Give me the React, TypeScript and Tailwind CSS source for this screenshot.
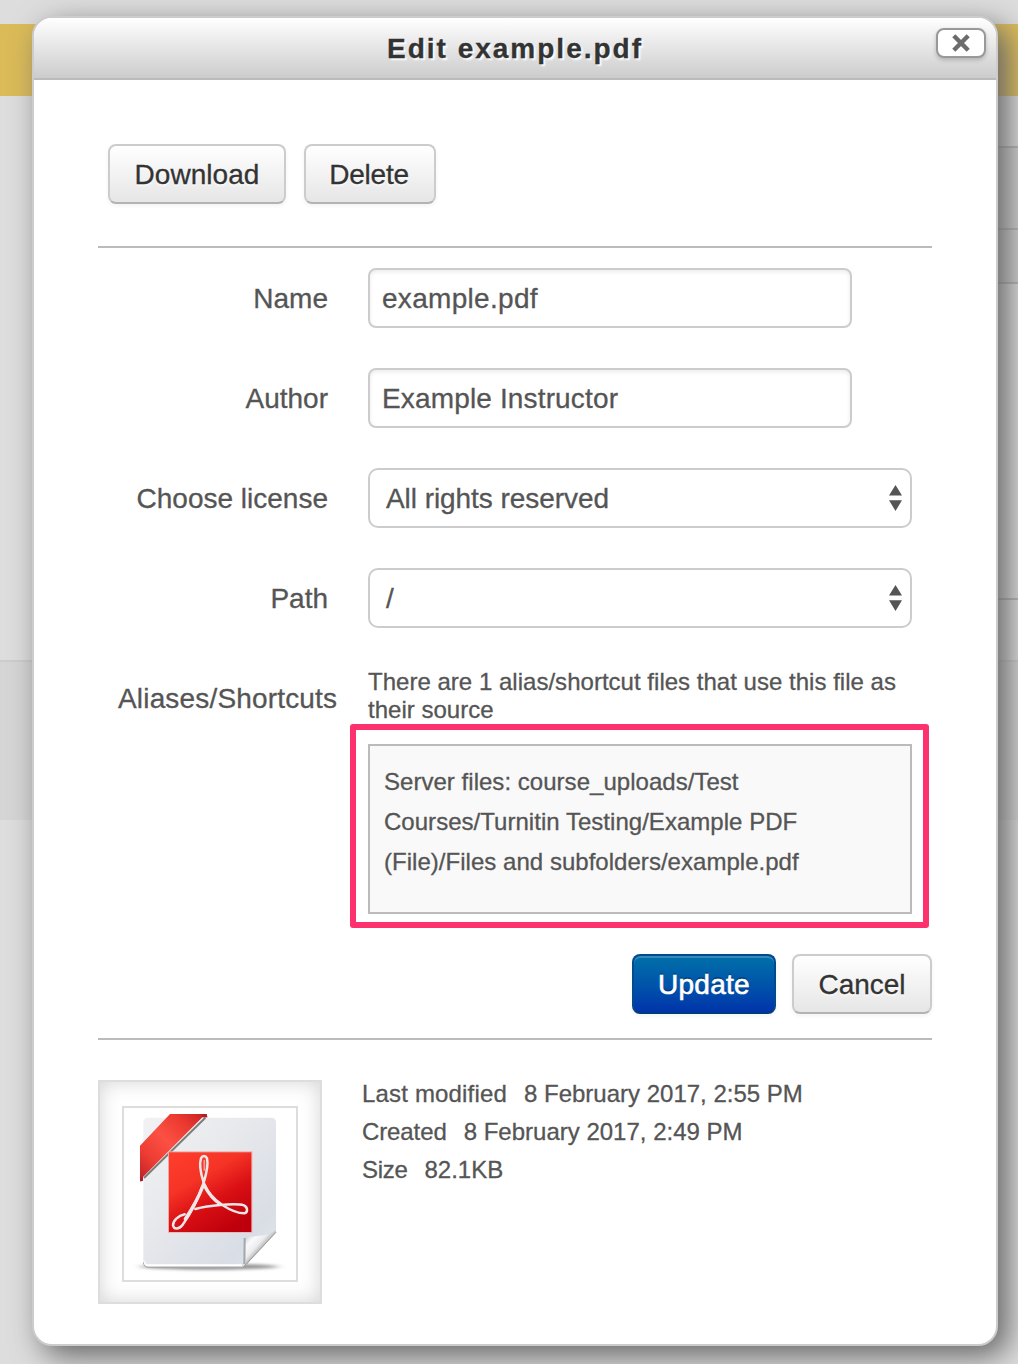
import type { ReactNode } from "react";

function Button({ children, className }: { children: ReactNode; className: string }) {
  return (
    <button
      type="button"
      className={`flex h-[60px] items-center justify-center rounded-[8px] border-2 border-[#ccc] border-b-[#b3b3b3] bg-linear-to-b from-white to-[#e6e6e6] pt-0.5 text-[28px] text-[#333] shadow-[inset_0_2px_0_rgba(255,255,255,0.2),0_2px_4px_rgba(0,0,0,0.05)] [text-shadow:0_2px_2px_rgba(255,255,255,0.75)] ${className}`}
    >
      {children}
    </button>
  );
}

function Row({ label, children }: { label: string; children: ReactNode }) {
  return (
    <div className="flex h-[60px] items-center">
      <label className="w-[230px] pt-0.5 text-right text-[28px] whitespace-nowrap">{label}</label>
      <div className="ml-10">{children}</div>
    </div>
  );
}

function TextField({ value, className }: { value: string; className: string }) {
  return (
    <input
      readOnly
      value={value}
      className={`block h-[60px] w-[484px] rounded-[8px] border-2 border-[#ccc] bg-white px-3 pt-0.5 text-[28px] shadow-[inset_0_2px_4px_rgba(0,0,0,0.08)] outline-none ${className}`}
    />
  );
}

function SelectField({ value }: { value: string }) {
  return (
    <div className="flex h-[60px] w-[544px] items-center justify-between rounded-[10px] border-2 border-[#ccc] bg-white pr-2 pl-4 text-[28px]">
      <span className="pt-0.5 tracking-[-0.06px]">{value}</span>
      <svg width="13" height="26" viewBox="0 0 13 26" className="fill-[#555]">
        <path d="M6.5 0 13 10.5H0zM0 15.2h13L6.5 26z" />
      </svg>
    </div>
  );
}

function PdfIcon() {
  return (
    <svg width="172" height="172" viewBox="0 0 172 172">
      <defs>
        <linearGradient id="paper" x1="0" y1="0" x2="1" y2="1">
          <stop offset="0" stopColor="#f2f2f4" />
          <stop offset="0.35" stopColor="#e9eaed" />
          <stop offset="0.8" stopColor="#d9dde5" />
          <stop offset="1" stopColor="#e3e6ea" />
        </linearGradient>
        <linearGradient id="square" x1="0.1" y1="0" x2="0.7" y2="1">
          <stop offset="0" stopColor="#fe3d2c" />
          <stop offset="0.35" stopColor="#f63426" />
          <stop offset="0.65" stopColor="#d90f14" />
          <stop offset="1" stopColor="#bd000b" />
        </linearGradient>
        <linearGradient id="ribbon" x1="1" y1="0" x2="0" y2="1">
          <stop offset="0" stopColor="#c41f20" />
          <stop offset="0.25" stopColor="#ec3a30" />
          <stop offset="0.5" stopColor="#fc5044" />
          <stop offset="0.75" stopColor="#ee3c33" />
          <stop offset="1" stopColor="#bb2028" />
        </linearGradient>
        <linearGradient id="fold" gradientUnits="userSpaceOnUse" x1="470" y1="500" x2="516" y2="542">
          <stop offset="0" stopColor="#d3d6dc" />
          <stop offset="0.3" stopColor="#fafafb" />
          <stop offset="0.65" stopColor="#ececee" />
          <stop offset="1" stopColor="#a6a7a9" />
        </linearGradient>
        <filter id="soft" x="-20%" y="-200%" width="140%" height="500%">
          <feGaussianBlur stdDeviation="14 5" />
        </filter>
        <filter id="edge" x="-200%" y="-20%" width="500%" height="140%">
          <feGaussianBlur stdDeviation="2" />
        </filter>
      </defs>
      <g transform="scale(0.33333) translate(-102 -114)">
        <ellipse cx="358" cy="590" rx="206" ry="9" fill="#666" opacity="0.7" filter="url(#soft)" />
        <path
          d="M174 143H544Q558 143 558 158V483L460 590H174Q160 590 160 576V158Q160 143 174 143Z"
          fill="url(#paper)"
        />
        <path d="M162 574Q163 586 176 586H456" fill="none" stroke="#fff" strokeWidth="6" />
        <path d="M160 577Q162 592 176 592H460" fill="none" stroke="#a5a7a9" strokeWidth="3" />
        <path d="M558 481Q540 499 466 500V588L558 487Z" fill="url(#fold)" />
        <path d="M464 504L463 582" stroke="#a4a8ae" strokeWidth="6" fill="none" filter="url(#edge)" />
        <path d="M461 590 558 487" stroke="#999a9c" strokeWidth="3" />
        <path d="M346 143 162 324" stroke="#333" strokeWidth="6" opacity="0.6" filter="url(#edge)" />
        <path d="M240 132H350L352 142H337L159 321V333L150 334V227Z" fill="url(#ribbon)" />
        <path d="M334 132H350L352 142H337ZM150 322L159 321V333L150 334Z" fill="#b01f29" />
        <rect x="234" y="244" width="253" height="244" fill="#f0a9a6" />
        <rect x="237" y="247" width="247" height="239" fill="url(#square)" />
        <g fill="none" stroke="#efe6e7" strokeLinecap="round" strokeLinejoin="round">
          <path
            d="M341 338C332 310 328 280 333 265C337 256 347 256 351 265C355 282 349 312 341 338C327 380 302 432 278 464C266 480 251 478 249 466C249 452 264 437 284 433"
            strokeWidth="7.5"
          />
          <path
            d="M341 338C350 362 370 388 397 405C420 420 446 430 463 430C474 427 474 412 462 406C444 401 415 403 390 405C363 407 338 411 316 417"
            strokeWidth="7.5"
          />
          <path d="M338 350C325 384 304 420 286 447M344 348C355 370 372 390 392 403" strokeWidth="10" />
          <path d="M343 272V300" stroke="#e6a5a3" strokeWidth="5" />
        </g>
      </g>
    </svg>
  );
}

function Meta({ label, value, tracking }: { label: string; value: string; tracking: string }) {
  return (
    <div className="flex h-[38px] items-center gap-[17px]">
      <span className={tracking}>{label}</span>
      <span>{value}</span>
    </div>
  );
}

function Backdrop() {
  return (
    <div className="absolute inset-0 flex justify-between bg-[#ddd]">
      <div className="w-1/2">
        <div className="mt-6 h-[72px] bg-[#dbbb58]" />
        <div className="mt-[564px] h-[160px] border-t-2 border-[#ccc] bg-[#d5d5d5]" />
      </div>
      <div className="w-1/2">
        <div className="mt-6 h-[72px] bg-[#dbbb58]" />
        <div className="mt-[50px] h-[84px] border-y-2 border-[#b4b4b4] bg-[#d0d0d0]" />
        <div className="h-[54px] border-b-2 border-[#b4b4b4] bg-[#d0d0d0]" />
        <div className="mt-[314px] h-[62px] border-t-2 border-[#b4b4b4]" />
        <div className="h-[160px] border-t-2 border-[#ccc] bg-[#d5d5d5]" />
      </div>
    </div>
  );
}

export default function App() {
  return (
    <div className="relative h-[1364px] w-[1018px] overflow-hidden font-['Liberation_Sans',Arial,sans-serif] text-[#555] [-webkit-text-stroke:0.3px]">
      <Backdrop />
      <div className="relative mt-4 ml-8 h-[1330px] w-[966px] rounded-[20px] border-2 border-[#ccc] bg-white shadow-[10px_10px_30px_#666]">
        <header className="relative flex h-[62px] items-center justify-center rounded-t-[18px] border-b-2 border-[#bbb] bg-linear-to-b from-white to-[#ccc]">
          <h1 className="pt-0.5 text-[28px] font-bold tracking-[2px] text-[#333] [text-shadow:2px_2px_2px_#fff]">
            Edit example.pdf
          </h1>
          <button
            type="button"
            aria-label="Close"
            className="absolute top-[10px] right-[10px] flex h-[30px] w-[50px] items-center justify-center rounded-[8px] border-2 border-[#999] bg-white shadow-[0_2px_4px_rgba(0,0,0,0.2)]"
          >
            <svg width="18" height="18" viewBox="0 0 18 18" className="stroke-[#6c6c6c]">
              <path d="M1.8 1.8 16.2 16.2M16.2 1.8 1.8 16.2" strokeWidth="4.4" />
            </svg>
          </button>
        </header>

        <main className="ml-16 w-[834px]">
          <div className="flex gap-[18px] pt-16 pl-[10px]">
            <Button className="w-[178px] tracking-[0.06px]">Download</Button>
            <Button className="w-[132px] pr-0.5 tracking-[-0.2px]">Delete</Button>
          </div>
          <hr className="mt-[42px] border-t-2 border-[#bbb]" />

          <div className="mt-5 flex flex-col gap-10">
            <Row label="Name">
              <TextField value="example.pdf" className="tracking-[0.3px]" />
            </Row>
            <Row label="Author">
              <TextField value="Example Instructor" className="tracking-[0.15px]" />
            </Row>
            <Row label="Choose license">
              <SelectField value="All rights reserved" />
            </Row>
            <Row label="Path">
              <SelectField value="/" />
            </Row>
          </div>

          <div className="mt-10 flex">
            <div className="flex h-[60px] w-[270px] items-center pt-0.5 pl-5 text-[28px] tracking-[0.17px]">
              Aliases/Shortcuts
            </div>
            <div className="relative w-[544px] text-[24px]">
              <p className="leading-[28px] tracking-[0.02px] whitespace-nowrap">
                There are 1 alias/shortcut files that use this file as
                <br />
                their source
              </p>
              <div className="mt-5 h-[170px] border-2 border-[#bbb] bg-[#f9f9f9] px-[14px] py-4 leading-[40px] tracking-[0.03px] whitespace-nowrap">
                Server files: course_uploads/Test
                <br />
                Courses/Turnitin Testing/Example PDF
                <br />
                (File)/Files and subfolders/example.pdf
              </div>
              <div className="absolute top-14 -left-[18px] h-[204px] w-[579px] rounded-[3px] border-[6px] border-[#fe316f]" />
            </div>
          </div>

          <div className="mt-10 flex justify-end gap-4">
            <button
              type="button"
              className="flex h-[60px] w-[144px] items-center justify-center rounded-[8px] border-2 border-[#004a94] border-b-[#003b80] bg-linear-to-b from-[#0070a8] to-[#0033aa] pt-0.5 text-[28px] tracking-[0.28px] text-white shadow-[inset_0_2px_0_rgba(255,255,255,0.2),0_2px_4px_rgba(0,0,0,0.05)] [-webkit-text-stroke:0.6px] [text-shadow:0_-2px_0_rgba(0,0,0,0.25)]"
            >
              Update
            </button>
            <Button className="w-[140px]">Cancel</Button>
          </div>
          <hr className="mt-6 border-t-2 border-[#bbb]" />

          <div className="mt-10 flex gap-10">
            <div className="flex h-[224px] w-[224px] items-center justify-center border-2 border-[#ddd] bg-white pt-1 shadow-[inset_0_0_20px_#d4d4d4]">
              <div className="h-[176px] w-[176px] border-2 border-[#ddd] bg-white">
                <PdfIcon />
              </div>
            </div>
            <div className="-mt-[5px] text-[24px]">
              <Meta label="Last modified" value="8 February 2017, 2:55 PM" tracking="tracking-[0.17px]" />
              <Meta label="Created" value="8 February 2017, 2:49 PM" tracking="tracking-[-0.1px]" />
              <Meta label="Size" value="82.1KB" tracking="tracking-[-0.3px]" />
            </div>
          </div>
        </main>
      </div>
    </div>
  );
}
